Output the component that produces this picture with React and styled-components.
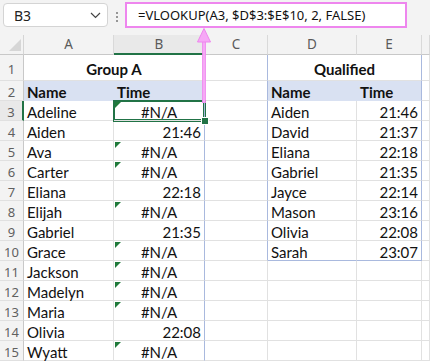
import React from 'react'
import styled, { createGlobalStyle } from 'styled-components'

const GREEN = '#217346'
const FLAG = '#1f7a3a'
const GRID = '#e1e1e1'
const EDGE = '#a9b9de'
const BAND = '#d9e1f2'
const PINK = '#ee86ee'

const groupA = [
  ['Adeline', '#N/A'], ['Aiden', '21:46'], ['Ava', '#N/A'], ['Carter', '#N/A'],
  ['Eliana', '22:18'], ['Elijah', '#N/A'], ['Gabriel', '21:35'], ['Grace', '#N/A'],
  ['Jackson', '#N/A'], ['Madelyn', '#N/A'], ['Maria', '#N/A'], ['Olivia', '22:08'],
  ['Wyatt', '#N/A'],
]

const qualified = [
  ['Aiden', '21:46'], ['David', '21:37'], ['Eliana', '22:18'], ['Gabriel', '21:35'],
  ['Jayce', '22:14'], ['Mason', '23:16'], ['Olivia', '22:08'], ['Sarah', '23:07'],
]

const columns = ['A', 'B', 'C', 'D', 'E', '']

function App() {
  return (
    <Page>
      <GlobalStyle />
      <Bar>
        <NameBox>
          B3
          <svg width="11" height="7" viewBox="0 0 11 7">
            <path d="M1 1 L5.5 5.5 L10 1" fill="none" stroke="#444" strokeWidth="1.2" />
          </svg>
        </NameBox>
        <Dots>
          <i /><i /><i />
        </Dots>
        <Formula>=VLOOKUP(A3, $D$3:$E$10, 2, FALSE)</Formula>
      </Bar>

      <Sheet>
        <Corner>
          <svg width="12" height="12" viewBox="0 0 12 12">
            <path d="M12 0 L12 12 L0 12 Z" fill="#d6d6d6" />
          </svg>
        </Corner>
        {columns.map((c) => (
          <ColHead key={c || 'F'} $active={c === 'B'}>{c}</ColHead>
        ))}

        <RowNum>1</RowNum>
        <Cell $span={2} $align="center" $bold $edgeRight>Group A</Cell>
        <Cell $edgeRight />
        <Cell $span={2} $align="center" $bold $edgeRight>Qualified</Cell>
        <Cell />

        <RowNum>2</RowNum>
        <Cell $band $bold>Name</Cell>
        <Cell $band $bold $edgeRight>Time</Cell>
        <Cell $edgeRight />
        <Cell $band $bold>Name</Cell>
        <Cell $band $bold $edgeRight>Time</Cell>
        <Cell />

        {groupA.map(([name, time], i) => {
          const row = i + 3
          const q = qualified[i]
          const missing = time === '#N/A'
          const last = row === 10
          return (
            <React.Fragment key={row}>
              <RowNum $active={row === 3}>{row}</RowNum>
              <Cell>{name}</Cell>
              <Cell
                $align={missing ? 'center' : 'right'}
                $flag={missing}
                $selected={row === 3}
                $edgeRight
              >
                {time}
              </Cell>
              <Cell $edgeRight={!!q} />
              <Cell $edgeBottom={last}>{q ? q[0] : ''}</Cell>
              <Cell $align="right" $edgeRight={!!q} $edgeBottom={last}>{q ? q[1] : ''}</Cell>
              <Cell />
            </React.Fragment>
          )
        })}
      </Sheet>

      <Arrow width="18" height="76" viewBox="0 0 18 76">
        <rect x="6.5" y="12" width="3" height="64" fill="#f6a8f6" stroke={PINK} strokeWidth="0.8" />
        <path d="M8 1.5 L14.5 15 L1.5 15 Z" fill="#f6a8f6" stroke={PINK} strokeWidth="1" strokeLinejoin="round" />
      </Arrow>
    </Page>
  )
}

export default App

const GlobalStyle = createGlobalStyle`
  body {
    margin: 0;
    background: #fff;
  }
`

const Page = styled.div`
  position: relative;
  width: 430px;
  height: 362px;
  overflow: hidden;
  background: #fff;
  font-family: Lato, "Liberation Sans", sans-serif;
  color: #111;
`

const Bar = styled.div`
  display: flex;
  align-items: flex-start;
  height: 35px;
  box-sizing: border-box;
  padding: 2px 0 0 3px;
  background: #f3f3f3;
`

const NameBox = styled.div`
  display: flex;
  align-items: center;
  justify-content: space-between;
  width: 105px;
  height: 24px;
  margin-top: 1px;
  box-sizing: border-box;
  padding: 0 6px 0 10px;
  background: #fff;
  border: 1px solid #d4d4d4;
  border-radius: 4px;
  font-family: "Noto Sans", "Open Sans", sans-serif;
  font-size: 14px;
  color: #222;
`

const Dots = styled.div`
  display: flex;
  flex-direction: column;
  gap: 2px;
  margin: 10px 7px 0 8px;

  i {
    display: block;
    width: 2px;
    height: 2px;
    border-radius: 1px;
    background: #777;
  }
`

const Formula = styled.div`
  width: 282px;
  height: 26px;
  box-sizing: border-box;
  padding: 0 0 1px 11px;
  display: flex;
  align-items: center;
  background: #fff;
  border: 2px solid ${PINK};
  font-family: "Noto Sans", "Open Sans", sans-serif;
  font-size: 13px;
  color: #111;
  white-space: nowrap;
`

const Sheet = styled.div`
  display: grid;
  grid-template-columns: 24px 90px 91px 63px 89px 65px 8px;
  grid-template-rows: 20px 26px repeat(14, 20px);
`

const Corner = styled.div`
  display: flex;
  align-items: flex-end;
  justify-content: flex-end;
  padding: 0 2px 3px 0;
  background: #f3f3f3;
  border-right: 1px solid #d5d5d5;
  border-bottom: 1px solid #c8c8c8;
`

const ColHead = styled.div`
  display: flex;
  align-items: center;
  justify-content: center;
  background: ${(p) => (p.$active ? '#e9e9e9' : '#f3f3f3')};
  border-right: 1px solid #d9d9d9;
  border-bottom: ${(p) => (p.$active ? `2px solid ${GREEN}` : '1px solid #c8c8c8')};
  font-family: "Noto Sans", "Open Sans", sans-serif;
  font-size: 13.5px;
  color: #5a5a5a;
  padding-bottom: 1px;
`

const RowNum = styled.div`
  display: flex;
  align-items: center;
  justify-content: center;
  padding-top: 2px;
  background: ${(p) => (p.$active ? '#e9e9e9' : '#f3f3f3')};
  border-right: ${(p) => (p.$active ? `2px solid ${GREEN}` : '1px solid #c8c8c8')};
  border-bottom: 1px solid #e0e0e0;
  font-family: "Noto Sans", "Open Sans", sans-serif;
  font-size: 13px;
  color: #606060;
`

const Cell = styled.div`
  position: relative;
  z-index: ${(p) => (p.$selected ? 2 : 'auto')};
  grid-column: span ${(p) => p.$span || 1};
  display: flex;
  align-items: center;
  justify-content: ${(p) =>
    p.$align === 'right' ? 'flex-end' : p.$align === 'center' ? 'center' : 'flex-start'};
  padding: 2px 3px 0;
  min-width: 0;
  white-space: nowrap;
  background: ${(p) => (p.$band ? BAND : '#fff')};
  border-right: 1px solid ${(p) => (p.$edgeRight ? EDGE : p.$band ? BAND : GRID)};
  border-bottom: 1px solid ${(p) => (p.$edgeBottom ? EDGE : p.$band ? BAND : GRID)};
  font-size: 15px;
  font-weight: ${(p) => (p.$bold ? 700 : 400)};
  box-shadow: ${(p) => (p.$selected ? `0 0 0 1px ${GREEN}, inset 0 0 0 1px ${GREEN}` : 'none')};

  &::before {
    content: '';
    display: ${(p) => (p.$flag ? 'block' : 'none')};
    position: absolute;
    top: 1px;
    left: 1px;
    border-top: 6px solid ${FLAG};
    border-right: 6px solid transparent;
  }

  &::after {
    content: '';
    display: ${(p) => (p.$selected ? 'block' : 'none')};
    position: absolute;
    right: -5px;
    bottom: -5px;
    width: 6px;
    height: 6px;
    background: ${GREEN};
    border: 1px solid #fff;
  }
`

const Arrow = styled.svg`
  position: absolute;
  left: 196px;
  top: 27px;
  z-index: 3;
`
